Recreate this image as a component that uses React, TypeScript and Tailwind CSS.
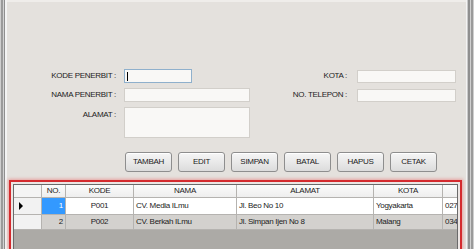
import React from "react";

const font = "font-['Liberation_Sans',Arial,sans-serif] text-[8px] tracking-[-0.3px] text-[#1c1c1c]";

function Input({ w, h, focused }: { w: string; h: string; focused?: boolean }) {
  return (
    <div
      className={`${w} ${h} border ${
        focused ? "border-[#8fb0cc]" : "border-[#d2cfca]"
      } bg-[#f9f8f6] flex items-center pl-[2px]`}
    >
      {focused && <div className="w-px h-[9px] bg-black" />}
    </div>
  );
}

const buttons = ["TAMBAH", "EDIT", "SIMPAN", "BATAL", "HAPUS", "CETAK"];

const cell = "border-r border-b border-[#b5b3b0] flex items-center px-[2px] whitespace-nowrap overflow-hidden";

export default function App() {
  return (
    <div className={`w-[474px] h-[249px] overflow-hidden flex bg-[#e4e1dd] ${font}`}>
      <div className="w-[7px] h-full bg-[linear-gradient(to_right,#cfcfcf_0px,#cfcfcf_1px,#9a9a9a_1px,#9a9a9a_3px,#d2d2d2_3px,#d2d2d2_4px,#8f8f8f_4px,#8f8f8f_5px,#f3f3f3_5px,#f3f3f3_7px)]" />
      <div className="flex-1 flex flex-col border-t-[2px] border-[#efedea] pt-[67px]">
        {/* row 1 */}
        <div className="flex h-[14px] items-center">
          <div className="w-[243px] flex items-center">
            <div className="w-[109px] text-right">KODE PENERBIT :</div>
            <div className="ml-[8px]">
              <Input w="w-[68px]" h="h-[14px]" focused />
            </div>
          </div>
          <div className="flex items-center">
            <div className="w-[97px] text-right">KOTA :</div>
            <div className="ml-[10px]">
              <Input w="w-[99px]" h="h-[13px]" />
            </div>
          </div>
        </div>
        {/* row 2 */}
        <div className="flex h-[14px] items-center mt-[5px]">
          <div className="w-[243px] flex items-center">
            <div className="w-[109px] text-right">NAMA PENERBIT :</div>
            <div className="ml-[8px]">
              <Input w="w-[126px]" h="h-[14px]" />
            </div>
          </div>
          <div className="flex items-center">
            <div className="w-[97px] text-right">NO. TELEPON :</div>
            <div className="ml-[10px]">
              <Input w="w-[99px]" h="h-[13px]" />
            </div>
          </div>
        </div>
        {/* row 3 */}
        <div className="flex mt-[5px]">
          <div className="w-[109px] text-right pt-[2px]">ALAMAT :</div>
          <div className="ml-[8px]">
            <Input w="w-[126px]" h="h-[31px]" />
          </div>
        </div>
        {/* buttons */}
        <div className="flex gap-[6px] ml-[118px] mt-[14px]">
          {buttons.map((b) => (
            <div
              key={b}
              className="w-[47px] h-[20px] rounded-[3px] border border-[#8e8e8e] bg-[linear-gradient(to_bottom,#f6f6f6,#dcdcdc)] flex items-center justify-center shadow-[inset_0_1px_0_#ffffff]"
            >
              {b}
            </div>
          ))}
        </div>
        {/* grid */}
        <div className="ml-[2px] mt-[8px] w-[453px] flex-1 border-[2px] border-b-0 border-[#d42a2e] shadow-[0_0_3px_1px_rgba(235,110,110,0.55)] p-[2px] pb-0 bg-[#ece6e4] flex">
          <div className="flex-1 border border-b-0 border-[#6a6a6a] bg-[#acaaa6] overflow-hidden">
            <div className="grid grid-cols-[28px_24px_68px_103px_137px_69px_40px]">
              {/* header */}
              <div className={`${cell} h-[13px] bg-[#f4f4f4]`} />
              {["NO.", "KODE", "NAMA", "ALAMAT", "KOTA", ""].map((h, i) => (
                <div
                  key={i}
                  className={`${cell} h-[13px] justify-center bg-[linear-gradient(to_bottom,#fbfbfb,#eeeeee)]`}
                >
                  {h}
                </div>
              ))}
              {/* row 1 */}
              <div className={`${cell} h-[17px] bg-[#f2f2f2] pl-[5px]`}>
                <div className="w-0 h-0 border-y-[4px] border-l-[4px] border-y-transparent border-l-black" />
              </div>
              <div className={`${cell} h-[17px] bg-[#3399ff] text-white justify-end`}>1</div>
              <div className={`${cell} h-[17px] bg-white justify-center`}>P001</div>
              <div className={`${cell} h-[17px] bg-white`}>CV. Media ILmu</div>
              <div className={`${cell} h-[17px] bg-white`}>Jl. Beo No 10</div>
              <div className={`${cell} h-[17px] bg-white`}>Yogyakarta</div>
              <div className={`${cell} h-[17px] bg-white`}>0274</div>
              {/* row 2 */}
              <div className={`${cell} h-[15px] bg-[#f2f2f2]`} />
              <div className={`${cell} h-[15px] bg-[#d3d1ce] justify-end`}>2</div>
              <div className={`${cell} h-[15px] bg-[#d3d1ce] justify-center`}>P002</div>
              <div className={`${cell} h-[15px] bg-[#d3d1ce]`}>CV. Berkah ILmu</div>
              <div className={`${cell} h-[15px] bg-[#d3d1ce]`}>Jl. Simpan Ijen No 8</div>
              <div className={`${cell} h-[15px] bg-[#d3d1ce]`}>Malang</div>
              <div className={`${cell} h-[15px] bg-[#d3d1ce]`}>0341</div>
            </div>
          </div>
        </div>
      </div>
      <div className="w-[8px] h-full bg-[linear-gradient(to_right,#f3f3f3_0px,#f3f3f3_1px,#c9c9c9_1px,#c9c9c9_2px,#8f8f8f_2px,#8f8f8f_4px,#d0d0d0_4px,#d0d0d0_5px,#9a9a9a_5px,#9a9a9a_7px,#cfcfcf_7px)]" />
    </div>
  );
}
